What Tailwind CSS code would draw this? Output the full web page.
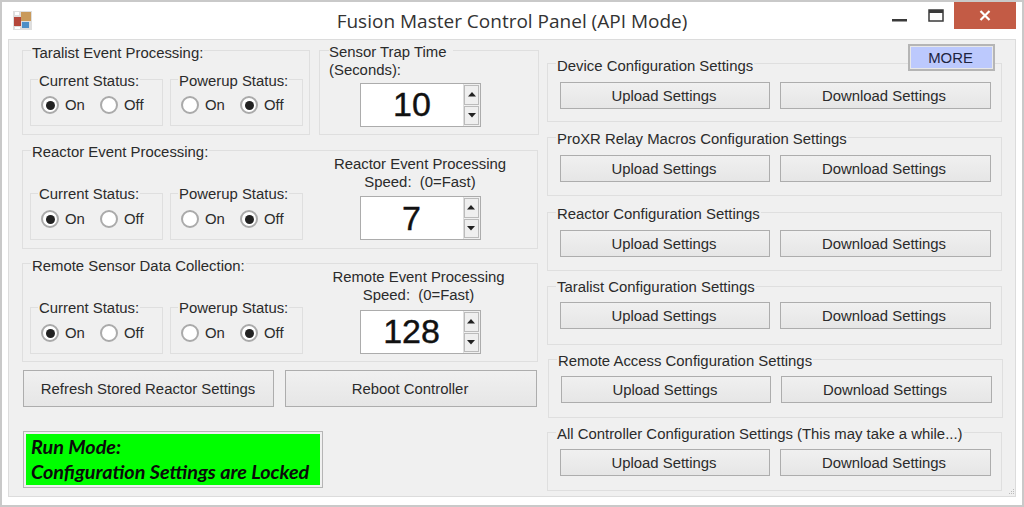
<!DOCTYPE html>
<html><head><meta charset="utf-8"><script src="https://cdn.jsdelivr.net/npm/@tailwindcss/browser@4"></script></head>
<body class="bg-white">
<div class="w-[1024px] h-[507px] overflow-hidden bg-white border-t-2 border-x-2 border-b-2 border-[#c9c9c9] font-['Liberation_Sans',sans-serif] text-[14.9px] leading-[18px] text-[#2b2b2b]">
  <header class="relative h-[37px] flex items-center justify-center">
    <svg class="absolute left-[11px] top-[9px]" width="19" height="19" viewBox="0 0 19 19"><rect width="19" height="19" fill="#dedede"/><rect x="1" y="6" width="7" height="9" fill="#b5473a"/><rect x="8" y="1" width="10" height="9" fill="#c99a5b"/><rect x="9" y="11" width="7" height="6" fill="#4d8fc7"/><rect x="2" y="1" width="4" height="3" fill="#fff"/><rect x="2" y="16" width="5" height="2" fill="#fff"/></svg>
    <h1 class="font-['Open_Sans',sans-serif] text-[19px] leading-[24px] mt-[1px] text-[#333]">Fusion Master Control Panel (API Mode)</h1>
    <div class="absolute right-[6px] top-0 flex items-start">
      <svg class="mr-[21px] mt-[17px]" width="15" height="3"><rect width="15" height="2.5" fill="#3a3a3a"/></svg>
      <svg class="mr-[10px] mt-[7px]" width="16" height="13"><rect x="1" y="1" width="14" height="11" fill="none" stroke="#3a3a3a" stroke-width="1.5"/><rect x="1" y="1" width="14" height="3" fill="#3a3a3a"/></svg>
      <div class="w-[62px] h-[27px] bg-[#c35b45] flex items-center justify-center">
        <svg width="12" height="11"><path d="M1.5 1 L10.5 10 M10.5 1 L1.5 10" stroke="#fff" stroke-width="2.2"/></svg>
      </div>
    </div>
  </header>

  <main class="relative mx-[6px] h-[458px] bg-[#f0f0f0] border border-[#dcdcdc] flex">
    <button class="absolute right-[20px] top-[4px] z-10 w-[87px] h-[27px] pr-[2px] bg-[#bcc9fd] border-2 border-[#b5b5b5] outline outline-1 outline-[#e8e8e8] outline-offset-[-3px] text-[#1d2340]">MORE</button>
    <svg class="absolute right-0 bottom-0" width="8" height="8"><path d="M6 1h1v1H6zM4 3h1v1H4zM6 3h1v1H6zM2 5h1v1H2zM4 5h1v1H4zM6 5h1v1H6z" fill="#bbb"/></svg>

    <!-- left column -->
    <section class="ml-[13px] w-[517px] shrink-0 flex flex-col">
      <div class="mt-[10px] flex gap-[9px] h-[85px]">
        <div class="w-[288px] border border-[#dfdfdf] pl-[7px] pr-[6px]">
          <div class="w-fit -mt-[7px] ml-[1px] px-[1px] bg-[#f0f0f0] whitespace-nowrap">Taralist Event Processing:</div>
          <div class="mt-[17px] flex justify-between">
            <div class="w-[133px] h-[47px] border border-[#dfdfdf] pl-[8px]">
              <div class="w-fit -mt-[8px] bg-[#f0f0f0] px-[1px] -ml-[1px]">Current Status:</div>
              <div class="mt-[6px] flex items-center ml-[2px]">
                <span class="w-[18px] h-[18px] rounded-full border-2 border-[#aaa] bg-white flex items-center justify-center"><span class="w-[9px] h-[9px] rounded-full bg-[#222]"></span></span><span class="ml-[6px] w-[35px]">On</span>
                <span class="w-[18px] h-[18px] rounded-full border-2 border-[#aaa] bg-white"></span><span class="ml-[6px]">Off</span>
              </div>
            </div>
            <div class="w-[133px] h-[47px] border border-[#dfdfdf] pl-[8px]">
              <div class="w-fit -mt-[8px] bg-[#f0f0f0] px-[1px] -ml-[1px]">Powerup Status:</div>
              <div class="mt-[6px] flex items-center ml-[2px]">
                <span class="w-[18px] h-[18px] rounded-full border-2 border-[#aaa] bg-white"></span><span class="ml-[6px] w-[35px]">On</span>
                <span class="w-[18px] h-[18px] rounded-full border-2 border-[#aaa] bg-white flex items-center justify-center"><span class="w-[9px] h-[9px] rounded-full bg-[#222]"></span></span><span class="ml-[6px]">Off</span>
              </div>
            </div>
          </div>
        </div>
        <div class="w-[220px] border border-[#dfdfdf] pl-[9px]">
          <div class="w-fit -mt-[8px] bg-[#f0f0f0] pr-[6px]">Sensor Trap Time<br>(Seconds):</div>
          <div class="ml-[31px] mt-[4px] w-[121px] h-[44px] bg-white border border-[#acacac] flex">
            <div class="flex-1 text-center text-[34px] leading-[41px] text-[#111] [-webkit-text-stroke:0.4px_#111]">10</div>
            <div class="w-[17px] bg-[#f0f0f0] flex flex-col gap-[1px] py-[1px] pr-[1px] border-l border-[#ddd]">
              <span class="flex-1 border border-[#bbb] bg-[#efefef] flex items-center justify-center"><svg width="8" height="5"><path d="M4 0 L8 4.5 H0Z" fill="#222"/></svg></span>
              <span class="flex-1 border border-[#bbb] bg-[#efefef] flex items-center justify-center"><svg width="8" height="5"><path d="M0 0 H8 L4 4.5Z" fill="#222"/></svg></span>
            </div>
          </div>
        </div>
      </div>

      <div class="mt-[15px] w-[516px] h-[99px] border border-[#dfdfdf] pl-[7px] flex">
        <div class="w-[288px] shrink-0">
          <div class="w-fit -mt-[8px] ml-[1px] bg-[#f0f0f0] px-[1px] whitespace-nowrap">Reactor Event Processing:</div>
          <div class="mt-[32px] flex gap-[7px]">
            <div class="w-[133px] h-[47px] border border-[#dfdfdf] pl-[8px]">
              <div class="w-fit -mt-[9px] bg-[#f0f0f0] px-[1px] -ml-[1px]">Current Status:</div>
              <div class="mt-[7px] flex items-center ml-[2px]">
                <span class="w-[18px] h-[18px] rounded-full border-2 border-[#aaa] bg-white flex items-center justify-center"><span class="w-[9px] h-[9px] rounded-full bg-[#222]"></span></span><span class="ml-[6px] w-[35px]">On</span>
                <span class="w-[18px] h-[18px] rounded-full border-2 border-[#aaa] bg-white"></span><span class="ml-[6px]">Off</span>
              </div>
            </div>
            <div class="w-[133px] h-[47px] border border-[#dfdfdf] pl-[8px]">
              <div class="w-fit -mt-[9px] bg-[#f0f0f0] px-[1px] -ml-[1px]">Powerup Status:</div>
              <div class="mt-[7px] flex items-center ml-[2px]">
                <span class="w-[18px] h-[18px] rounded-full border-2 border-[#aaa] bg-white"></span><span class="ml-[6px] w-[35px]">On</span>
                <span class="w-[18px] h-[18px] rounded-full border-2 border-[#aaa] bg-white flex items-center justify-center"><span class="w-[9px] h-[9px] rounded-full bg-[#222]"></span></span><span class="ml-[6px]">Off</span>
              </div>
            </div>
          </div>
        </div>
        <div class="ml-[7px] w-[190px] flex flex-col items-center">
          <div class="mt-[4px] text-center whitespace-nowrap">Reactor Event Processing<br>Speed:&nbsp; (0=Fast)</div>
          <div class="mt-[5px] w-[121px] h-[44px] bg-white border border-[#acacac] flex">
            <div class="flex-1 text-center text-[34px] leading-[42px] text-[#111] [-webkit-text-stroke:0.4px_#111]">7</div>
            <div class="w-[17px] bg-[#f0f0f0] flex flex-col gap-[1px] py-[1px] pr-[1px] border-l border-[#ddd]">
              <span class="flex-1 border border-[#bbb] bg-[#efefef] flex items-center justify-center"><svg width="8" height="5"><path d="M4 0 L8 4.5 H0Z" fill="#222"/></svg></span>
              <span class="flex-1 border border-[#bbb] bg-[#efefef] flex items-center justify-center"><svg width="8" height="5"><path d="M0 0 H8 L4 4.5Z" fill="#222"/></svg></span>
            </div>
          </div>
        </div>
      </div>

      <div class="mt-[14px] w-[516px] h-[99px] border border-[#dfdfdf] pl-[7px] flex">
        <div class="w-[288px] shrink-0">
          <div class="w-fit -mt-[7px] ml-[1px] bg-[#f0f0f0] px-[1px] whitespace-nowrap">Remote Sensor Data Collection:</div>
          <div class="mt-[32px] flex gap-[7px]">
            <div class="w-[133px] h-[47px] border border-[#dfdfdf] pl-[8px]">
              <div class="w-fit -mt-[9px] bg-[#f0f0f0] px-[1px] -ml-[1px]">Current Status:</div>
              <div class="mt-[7px] flex items-center ml-[2px]">
                <span class="w-[18px] h-[18px] rounded-full border-2 border-[#aaa] bg-white flex items-center justify-center"><span class="w-[9px] h-[9px] rounded-full bg-[#222]"></span></span><span class="ml-[6px] w-[35px]">On</span>
                <span class="w-[18px] h-[18px] rounded-full border-2 border-[#aaa] bg-white"></span><span class="ml-[6px]">Off</span>
              </div>
            </div>
            <div class="w-[133px] h-[47px] border border-[#dfdfdf] pl-[8px]">
              <div class="w-fit -mt-[9px] bg-[#f0f0f0] px-[1px] -ml-[1px]">Powerup Status:</div>
              <div class="mt-[7px] flex items-center ml-[2px]">
                <span class="w-[18px] h-[18px] rounded-full border-2 border-[#aaa] bg-white"></span><span class="ml-[6px] w-[35px]">On</span>
                <span class="w-[18px] h-[18px] rounded-full border-2 border-[#aaa] bg-white flex items-center justify-center"><span class="w-[9px] h-[9px] rounded-full bg-[#222]"></span></span><span class="ml-[6px]">Off</span>
              </div>
            </div>
          </div>
        </div>
        <div class="ml-[7px] w-[190px] flex flex-col items-center">
          <div class="mt-[4px] mr-[3px] text-center whitespace-nowrap">Remote Event Processing<br>Speed:&nbsp; (0=Fast)</div>
          <div class="mt-[6px] w-[121px] h-[44px] bg-white border border-[#acacac] flex">
            <div class="flex-1 text-center text-[34px] leading-[41px] text-[#111] [-webkit-text-stroke:0.4px_#111]">128</div>
            <div class="w-[17px] bg-[#f0f0f0] flex flex-col gap-[1px] py-[1px] pr-[1px] border-l border-[#ddd]">
              <span class="flex-1 border border-[#bbb] bg-[#efefef] flex items-center justify-center"><svg width="8" height="5"><path d="M4 0 L8 4.5 H0Z" fill="#222"/></svg></span>
              <span class="flex-1 border border-[#bbb] bg-[#efefef] flex items-center justify-center"><svg width="8" height="5"><path d="M0 0 H8 L4 4.5Z" fill="#222"/></svg></span>
            </div>
          </div>
        </div>
      </div>

      <div class="mt-[8px] ml-[1px] flex gap-[11px]">
        <button class="w-[251px] h-[37px] pr-[1px] border border-[#adadad] bg-gradient-to-b from-[#f0f0f0] to-[#e6e6e6]">Refresh Stored Reactor Settings</button>
        <button class="w-[252px] h-[37px] pr-[2px] border border-[#adadad] bg-gradient-to-b from-[#f0f0f0] to-[#e6e6e6]">Reboot Controller</button>
      </div>

      <div class="mt-[24px] ml-[1px] w-[300px] h-[57px] border border-[#b5b5b5] p-[2px]">
        <div class="h-full bg-[#00ff00] px-[5px] font-['Lato','Open_Sans',sans-serif] font-bold italic text-[19.8px] leading-[25px] text-[#0a0a0a] whitespace-nowrap">Run Mode:<br>Configuration Settings are Locked</div>
      </div>
    </section>

    <!-- right column -->
    <section class="ml-[8px] w-[456px] flex flex-col">
      <div class="mt-[23px] w-[455px] h-[59px] border border-[#dfdfdf] pl-[12px] pr-[10px]">
        <div class="w-fit -mt-[7px] -ml-[4px] bg-[#f0f0f0] px-[1px]">Device Configuration Settings</div>
        <div class="mt-[7px] flex gap-[10px]"><button class="w-[210px] shrink-0 h-[27px] pr-[2px] border border-[#adadad] bg-gradient-to-b from-[#f0f0f0] to-[#e6e6e6]">Upload Settings</button><button class="w-[211px] shrink-0 h-[27px] pr-[3px] border border-[#adadad] bg-gradient-to-b from-[#f0f0f0] to-[#e6e6e6]">Download Settings</button></div>
      </div>
      <div class="mt-[15px] w-[455px] h-[59px] border border-[#dfdfdf] pl-[12px] pr-[10px]">
        <div class="w-fit -mt-[8px] -ml-[4px] bg-[#f0f0f0] px-[1px]">ProXR Relay Macros Configuration Settings</div>
        <div class="mt-[7px] flex gap-[10px]"><button class="w-[210px] shrink-0 h-[27px] pr-[2px] border border-[#adadad] bg-gradient-to-b from-[#f0f0f0] to-[#e6e6e6]">Upload Settings</button><button class="w-[211px] shrink-0 h-[27px] pr-[3px] border border-[#adadad] bg-gradient-to-b from-[#f0f0f0] to-[#e6e6e6]">Download Settings</button></div>
      </div>
      <div class="mt-[16px] w-[455px] h-[59px] border border-[#dfdfdf] pl-[12px] pr-[10px]">
        <div class="w-fit -mt-[8px] -ml-[4px] bg-[#f0f0f0] px-[1px]">Reactor Configuration Settings</div>
        <div class="mt-[7px] flex gap-[10px]"><button class="w-[210px] shrink-0 h-[27px] pr-[2px] border border-[#adadad] bg-gradient-to-b from-[#f0f0f0] to-[#e6e6e6]">Upload Settings</button><button class="w-[211px] shrink-0 h-[27px] pr-[3px] border border-[#adadad] bg-gradient-to-b from-[#f0f0f0] to-[#e6e6e6]">Download Settings</button></div>
      </div>
      <div class="mt-[15px] w-[455px] h-[59px] border border-[#dfdfdf] pl-[12px] pr-[10px]">
        <div class="w-fit -mt-[9px] -ml-[4px] bg-[#f0f0f0] px-[1px]">Taralist Configuration Settings</div>
        <div class="mt-[6px] flex gap-[10px]"><button class="w-[210px] shrink-0 h-[27px] pr-[2px] border border-[#adadad] bg-gradient-to-b from-[#f0f0f0] to-[#e6e6e6]">Upload Settings</button><button class="w-[211px] shrink-0 h-[27px] pr-[3px] border border-[#adadad] bg-gradient-to-b from-[#f0f0f0] to-[#e6e6e6]">Download Settings</button></div>
      </div>
      <div class="mt-[14px] ml-[1px] w-[455px] h-[59px] border border-[#dfdfdf] pl-[12px] pr-[10px]">
        <div class="w-fit -mt-[8px] -ml-[4px] bg-[#f0f0f0] px-[1px]">Remote Access Configuration Settings</div>
        <div class="mt-[6px] flex gap-[10px]"><button class="w-[210px] shrink-0 h-[27px] pr-[2px] border border-[#adadad] bg-gradient-to-b from-[#f0f0f0] to-[#e6e6e6]">Upload Settings</button><button class="w-[211px] shrink-0 h-[27px] pr-[3px] border border-[#adadad] bg-gradient-to-b from-[#f0f0f0] to-[#e6e6e6]">Download Settings</button></div>
      </div>
      <div class="mt-[14px] w-[455px] h-[59px] border border-[#dfdfdf] pl-[12px] pr-[10px]">
        <div class="w-fit -mt-[8px] -ml-[4px] bg-[#f0f0f0] px-[1px] whitespace-nowrap">All Controller Configuration Settings (This may take a while...)</div>
        <div class="mt-[6px] flex gap-[10px]"><button class="w-[210px] shrink-0 h-[27px] pr-[2px] border border-[#adadad] bg-gradient-to-b from-[#f0f0f0] to-[#e6e6e6]">Upload Settings</button><button class="w-[211px] shrink-0 h-[27px] pr-[3px] border border-[#adadad] bg-gradient-to-b from-[#f0f0f0] to-[#e6e6e6]">Download Settings</button></div>
      </div>
    </section>
  </main>
</div>
</body></html>
